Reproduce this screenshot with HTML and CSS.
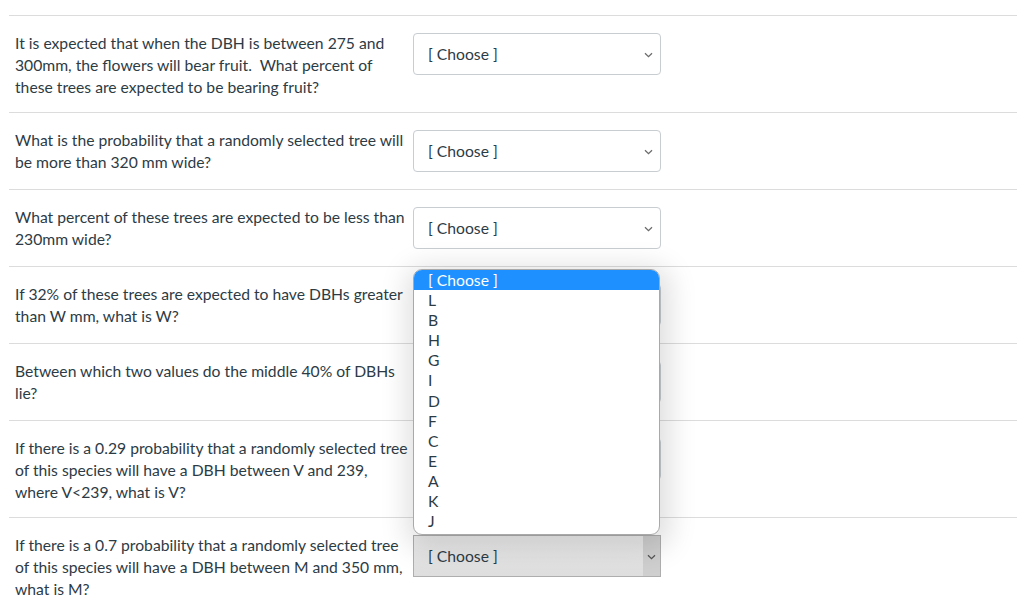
FILE: index.html
```html
<!DOCTYPE html>
<html lang="en">
<head>
<meta charset="utf-8">
<title>Quiz</title>
<link rel="stylesheet" href="styles.css">
</head>
<body>
<div class="quiz">
  <div class="row">
    <div class="q">It is expected that when the DBH is between 275 and 300mm, the flowers will bear fruit.&nbsp; What percent of these trees are expected to be bearing fruit?</div>
    <div class="sel-wrap"><div class="select"><span>[ Choose ]</span><svg class="chev" width="9" height="6" viewBox="0 0 9 6"><path d="M1 1.2 L4.5 4.6 L8 1.2" fill="none" stroke="#6b6b6b" stroke-width="1.3"/></svg></div></div>
  </div>
  <div class="row">
    <div class="q">What is the probability that a randomly selected tree will be more than 320 mm wide?</div>
    <div class="sel-wrap"><div class="select"><span>[ Choose ]</span><svg class="chev" width="9" height="6" viewBox="0 0 9 6"><path d="M1 1.2 L4.5 4.6 L8 1.2" fill="none" stroke="#6b6b6b" stroke-width="1.3"/></svg></div></div>
  </div>
  <div class="row">
    <div class="q">What percent of these trees are expected to be less than 230mm wide?</div>
    <div class="sel-wrap"><div class="select"><span>[ Choose ]</span><svg class="chev" width="9" height="6" viewBox="0 0 9 6"><path d="M1 1.2 L4.5 4.6 L8 1.2" fill="none" stroke="#6b6b6b" stroke-width="1.3"/></svg></div></div>
  </div>
  <div class="row">
    <div class="q">If 32% of these trees are expected to have DBHs greater than W mm, what is W?</div>
    <div class="sel-wrap">
      <div class="select"><span>[ Choose ]</span><svg class="chev" width="9" height="6" viewBox="0 0 9 6"><path d="M1 1.2 L4.5 4.6 L8 1.2" fill="none" stroke="#6b6b6b" stroke-width="1.3"/></svg></div>
      <ul class="listbox">
        <li class="active">[ Choose ]</li>
        <li>L</li><li>B</li><li>H</li><li>G</li><li>I</li><li>D</li><li>F</li><li>C</li><li>E</li><li>A</li><li>K</li><li>J</li>
      </ul>
    </div>
  </div>
  <div class="row">
    <div class="q">Between which two values do the middle 40% of DBHs lie?</div>
    <div class="sel-wrap"><div class="select"><span>[ Choose ]</span><svg class="chev" width="9" height="6" viewBox="0 0 9 6"><path d="M1 1.2 L4.5 4.6 L8 1.2" fill="none" stroke="#6b6b6b" stroke-width="1.3"/></svg></div></div>
  </div>
  <div class="row">
    <div class="q">If there is a 0.29 probability that a randomly selected tree of this species will have a DBH between V and 239, where V&lt;239, what is V?</div>
    <div class="sel-wrap"><div class="select"><span>[ Choose ]</span><svg class="chev" width="9" height="6" viewBox="0 0 9 6"><path d="M1 1.2 L4.5 4.6 L8 1.2" fill="none" stroke="#6b6b6b" stroke-width="1.3"/></svg></div></div>
  </div>
  <div class="row">
    <div class="q">If there is a 0.7 probability that a randomly selected tree of this species will have a DBH between M and 350 mm, what is M?</div>
    <div class="sel-wrap"><div class="select hover"><span>[ Choose ]</span><span class="arrow-box"><svg class="chev" width="9" height="6" viewBox="0 0 9 6"><path d="M1 1.2 L4.5 4.6 L8 1.2" fill="none" stroke="#555" stroke-width="1.3"/></svg></span></div></div>
  </div>
</div>
</body>
</html>
```

FILE: styles.css
```css
html, body {
  margin: 0;
  padding: 0;
  background: #ffffff;
}
body {
  font-family: Lato, "Open Sans", Arial, sans-serif;
  font-size: 15.7px;
  color: #2d3b45;
}
.quiz {
  margin: 15px 0 0 9px;
  width: 1008px;
}
.row {
  border-top: 1px solid #dcdcdc;
  display: grid;
  grid-template-columns: 396px 248px;
  column-gap: 2px;
  padding: 16px 0 14px 6px;
}
.q {
  line-height: 22px;
}
.sel-wrap {
  position: relative;
  padding-top: 1px;
}
.select {
  box-sizing: border-box;
  height: 42px;
  margin-bottom: 3px;
  border: 1px solid #c7cdd1;
  border-radius: 4px;
  background: #fff;
  display: flex;
  align-items: center;
  justify-content: space-between;
  padding: 0 7px 0 14px;
  line-height: 20px;
}
.chev {
  display: block;
  margin-top: 1px;
}
.select.hover {
  background: linear-gradient(#ececec, #dedede);
  border-color: #aeaeae;
  border-radius: 0;
  padding-right: 0;
}
.arrow-box {
  align-self: stretch;
  width: 17px;
  background: #cfcfcf;
  display: flex;
  align-items: center;
  justify-content: center;
}
.listbox {
  position: absolute;
  left: 0;
  top: -14px;
  width: 247px;
  box-sizing: border-box;
  margin: 0;
  padding: 0 0 3px 0;
  list-style: none;
  background: #fff;
  border: 1px solid #a9a9a9;
  border-radius: 9px;
  overflow: hidden;
  box-shadow: 2px 6px 28px 8px rgba(0, 0, 0, 0.13);
  z-index: 5;
}
.listbox li {
  height: 20.1px;
  line-height: 20px;
  padding-left: 14px;
}
.listbox li.active {
  background: #1e90ff;
  color: #ffffff;
}
```
